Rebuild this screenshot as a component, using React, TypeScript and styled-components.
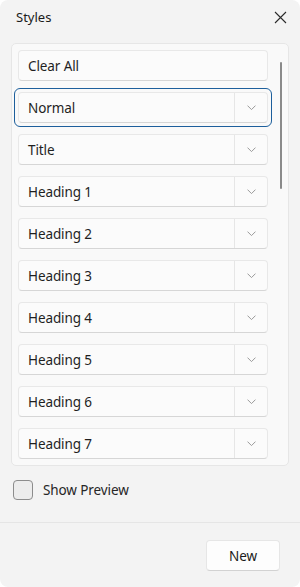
import React, { FC } from 'react';
import styled, { createGlobalStyle } from 'styled-components';

const GlobalStyle = createGlobalStyle`
    html, body {
        margin: 0;
        padding: 0;
        background: #ffffff;
    }
    body {
        font-family: 'Segoe UI', 'Noto Sans', 'Open Sans', sans-serif;
        color: #1b1b1b;
    }
`;

const Dialog = styled.div`
    width: 300px;
    height: 587px;
    box-sizing: border-box;
    background: #f3f3f3;
    border-radius: 8px;
    display: flex;
    flex-direction: column;
    overflow: hidden;
`;

const Header = styled.div`
    height: 34px;
    display: flex;
    align-items: center;
    justify-content: space-between;
    padding: 0 16px;
`;

const Heading = styled.span`
    font-size: 13px;
    color: #1b1b1b;
`;

const CloseButton = styled.button`
    border: none;
    background: transparent;
    padding: 0;
    margin-right: -3px;
    width: 14px;
    height: 14px;
    display: flex;
    align-items: center;
    justify-content: center;
    color: #2b2b2b;
`;

const Panel = styled.div`
    position: relative;
    margin: 9px 11px 0;
    height: 423px;
    box-sizing: border-box;
    background: #f9f9f9;
    border: 1px solid #e6e6e6;
    border-radius: 5px;
    padding: 6px 20px 0 6px;
    display: flex;
    flex-direction: column;
    gap: 11px;
`;

const ScrollThumb = styled.div`
    position: absolute;
    right: 6px;
    top: 18px;
    width: 2px;
    height: 127px;
    border-radius: 1px;
    background: #8a8a8a;
`;

const Row = styled.div<{ $focused?: boolean }>`
    position: relative;
    height: 31px;
    box-sizing: border-box;
    flex-shrink: 0;
    background: #fbfbfb;
    border: 1px solid #e8e8e8;
    border-bottom-color: #d6d6d6;
    border-radius: 4px;
    display: flex;
    align-items: stretch;

    ${({ $focused }) =>
        $focused &&
        `
        &::after {
            content: '';
            position: absolute;
            inset: -5px -5px -5px -5px;
            border: 1.5px solid #1d5f9c;
            border-radius: 6px;
            pointer-events: none;
        }
    `}
`;

const RowLabel = styled.span`
    flex: 1;
    display: flex;
    align-items: center;
    padding-left: 9px;
    font-size: 13.5px;
    letter-spacing: -0.1px;
    color: #1f1f1f;
`;

const ChevronBox = styled.span`
    width: 32px;
    border-left: 1px solid #e6e6e6;
    display: flex;
    align-items: center;
    justify-content: center;
    color: #9a9a9a;
`;

const OptionsRow = styled.label`
    display: flex;
    align-items: center;
    gap: 10px;
    padding: 14px 13px 0;
    font-size: 13.5px;
    letter-spacing: -0.1px;
    color: #262626;
`;

const CheckBox = styled.span`
    width: 20px;
    height: 20px;
    box-sizing: border-box;
    border: 1px solid #8c8c8c;
    border-radius: 4px;
    background: #ececec;
`;

const Footer = styled.div`
    margin-top: auto;
    height: 64px;
    border-top: 1px solid #e5e5e5;
    display: flex;
    justify-content: flex-end;
    align-items: center;
    padding: 0 20px 0 0;
`;

const Button = styled.button`
    width: 74px;
    height: 31px;
    margin-top: 1px;
    border: 1px solid #e6e6e6;
    border-bottom-color: #d2d2d2;
    border-radius: 4px;
    background: #fdfdfd;
    font-family: inherit;
    font-size: 13.5px;
    color: #1b1b1b;
`;

const Chevron: FC = () => (
    <svg width="9" height="6" viewBox="0 0 9 6" fill="none">
        <path d="M0.8 0.9 L4.5 4.6 L8.2 0.9" stroke="currentColor" strokeWidth="1" strokeLinecap="round" />
    </svg>
);

const styles = ['Normal', 'Title', 'Heading 1', 'Heading 2', 'Heading 3', 'Heading 4', 'Heading 5', 'Heading 6', 'Heading 7'];

export default function App() {
    return (
        <>
            <GlobalStyle />
            <Dialog>
                <Header>
                    <Heading>Styles</Heading>
                    <CloseButton aria-label="Close">
                        <svg width="13" height="13" viewBox="0 0 13 13">
                            <path d="M1 1 L12 12 M12 1 L1 12" stroke="currentColor" strokeWidth="1.1" />
                        </svg>
                    </CloseButton>
                </Header>
                <Panel>
                    <Row>
                        <RowLabel>Clear All</RowLabel>
                    </Row>
                    {styles.map((name, i) => (
                        <Row key={name} $focused={i === 0}>
                            <RowLabel>{name}</RowLabel>
                            <ChevronBox>
                                <Chevron />
                            </ChevronBox>
                        </Row>
                    ))}
                    <ScrollThumb />
                </Panel>
                <OptionsRow>
                    <CheckBox />
                    Show Preview
                </OptionsRow>
                <Footer>
                    <Button>New</Button>
                </Footer>
            </Dialog>
        </>
    );
}
